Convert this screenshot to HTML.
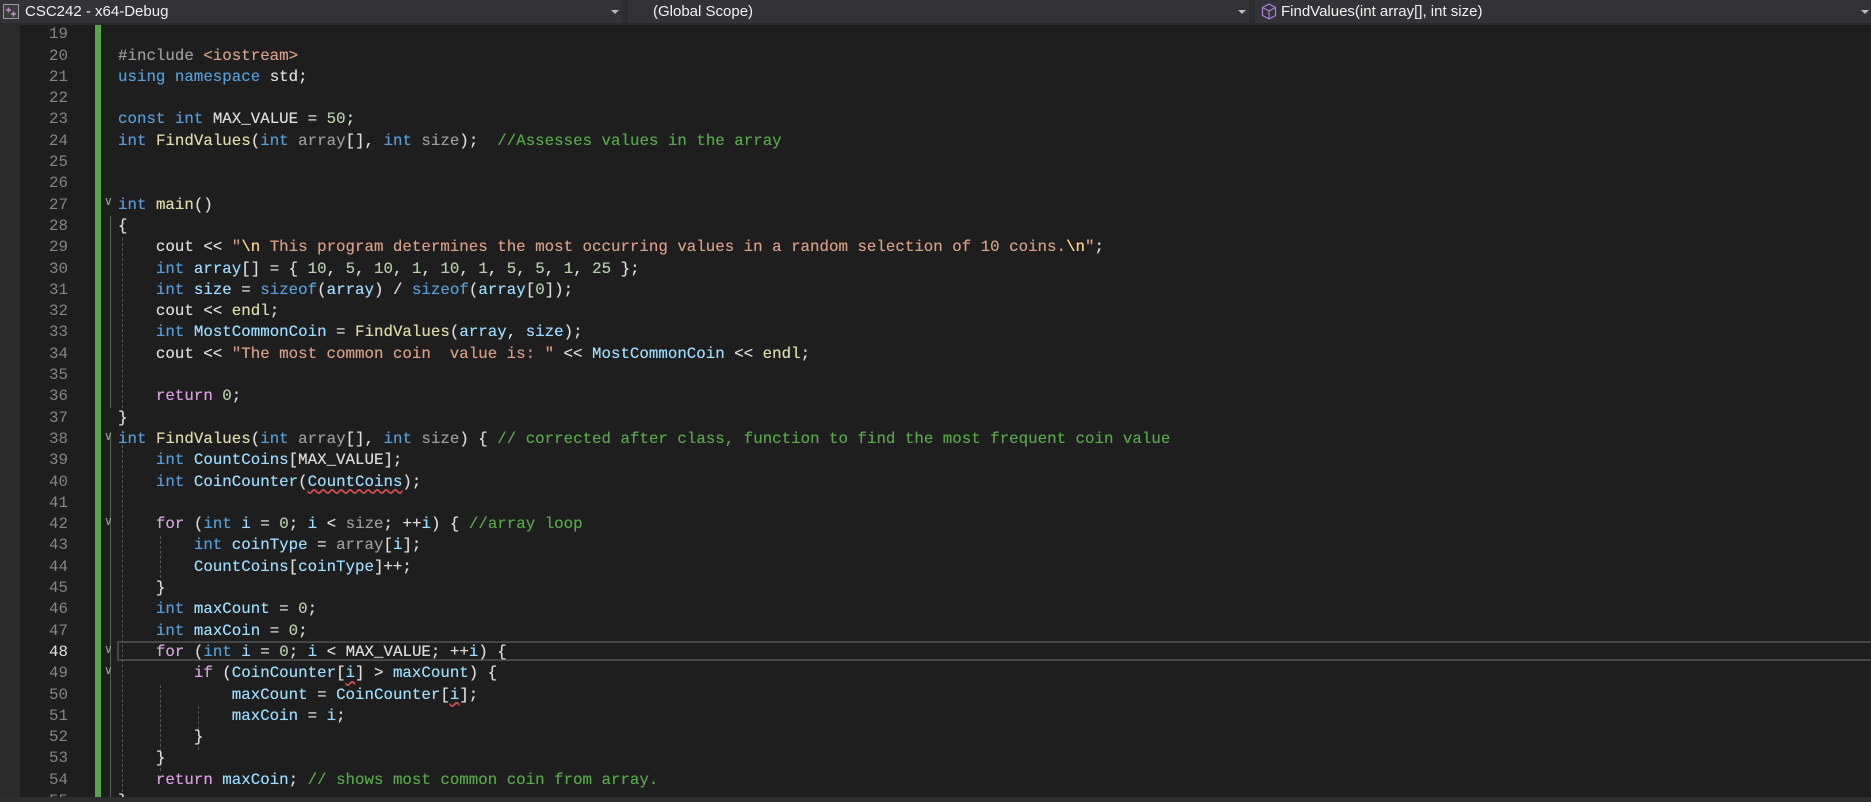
<!DOCTYPE html>
<html><head><meta charset="utf-8"><style>
html,body{margin:0;padding:0;background:#1e1e1e;width:1871px;height:802px;overflow:hidden;position:relative}
.top{position:absolute;left:0;top:0;width:1871px;height:23px;background:#333337;border-bottom:2px solid #2a2a2a}
.dd{position:absolute;top:0;height:23px;font:15px "Liberation Sans",sans-serif;color:#f1f1f1;line-height:23px}
.arr{position:absolute;top:10px;width:0;height:0;border-left:4px solid transparent;border-right:4px solid transparent;border-top:4px solid #bbb}
.sep{position:absolute;top:0;width:6px;height:23px;background:#2d2d30}
.strip{position:absolute;left:0;top:25px;width:20px;height:772px;background:#2b2b2b}
.green{position:absolute;left:95px;top:25px;width:6px;height:772px;background:#57a64a}
.nums{position:absolute;left:20px;top:24.3px;width:48px;text-align:right;font:15.8px/21.3px "Liberation Mono",monospace;color:#858585;white-space:pre}
.code{position:absolute;left:118px;top:24.3px;font:15.8px/21.3px "Liberation Mono",monospace;color:#dcdcdc;white-space:pre;text-shadow:0 0 0.4px currentColor}
.k{color:#569cd6}.c{color:#d8a0df}.f{color:#dcdcaa}.v{color:#9cdcfe}.p{color:#9a9a9a}.s{color:#d69d85}.n{color:#b5cea8}.m{color:#57a64a}.pp{color:#9b9b9b}.o{color:#b4b4b4}.e{color:#ffd68f}
.sq{text-decoration:underline wavy #e04040;text-underline-offset:3px}
.hl{position:absolute;left:117px;top:641px;width:1754px;height:16px;border:2px solid #464646}
.vg{position:absolute;width:0;border-left:1px dashed #555}
.fl{position:absolute;left:110px;width:0;border-left:1px solid #5a5a5a}
.fold{position:absolute;left:104px;font:12px "DejaVu Sans",sans-serif;color:#a0a0a0}
.bot{position:absolute;left:0;top:797px;width:1871px;height:5px;background:#2e2e2e}
</style></head><body>
<div class="top">
 <div class="dd" style="left:0;width:622px"><svg style="position:absolute;left:3px;top:4px" width="16" height="15"><rect x="0.5" y="0.5" width="15" height="14" fill="#3c3c3c" stroke="#9a9a9a"/><path d="M3 6h5M5.5 3.5v5M8 10h5M10.5 7.5v5" stroke="#c586c0" stroke-width="1.5"/></svg><span style="position:absolute;left:25px">CSC242 - x64-Debug</span><div class="arr" style="left:611px"></div></div>
 <div class="sep" style="left:622px"></div>
 <div class="dd" style="left:628px;width:620px"><span style="position:absolute;left:25px">(Global Scope)</span><div class="arr" style="left:610px"></div></div>
 <div class="sep" style="left:1249px"></div>
 <div class="dd" style="left:1255px;width:616px"><svg style="position:absolute;left:6px;top:3px" width="16" height="17"><path d="M8 1L14.5 4.5V12.5L8 16L1.5 12.5V4.5Z M1.5 4.5L8 8L14.5 4.5 M8 8V16" fill="none" stroke="#a87fd8" stroke-width="1.2"/></svg><span style="position:absolute;left:26px">FindValues(int array[], int size)</span><div class="arr" style="left:606px"></div></div>
</div>
<div class="strip"></div>
<div class="green"></div>
<div class="nums">19
20
21
22
23
24
25
26
27
28
29
30
31
32
33
34
35
36
37
38
39
40
41
42
43
44
45
46
47
<span style="color:#e0e0e0">48</span>
49
50
51
52
53
54
55</div>
<div class="hl"></div>
<div class="fl" style="top:216px;height:192px"></div>
<div class="fl" style="top:432px;height:370px"></div>
<div class="vg" style="left:122px;top:238px;height:170px"></div>
<div class="vg" style="left:122px;top:430px;height:367px"></div>
<div class="vg" style="left:160px;top:536px;height:42px"></div>
<div class="vg" style="left:160px;top:685px;height:86px"></div>
<div class="vg" style="left:198px;top:706px;height:44px"></div>
<div class="fold" style="top:194px">&#8744;</div>
<div class="fold" style="top:429px">&#8744;</div>
<div class="fold" style="top:514px">&#8744;</div>
<div class="fold" style="top:642px">&#8744;</div>
<div class="fold" style="top:663px">&#8744;</div>
<div class="code">
<span class="pp">#include</span> <span class="s">&lt;iostream&gt;</span>
<span class="k">using</span> <span class="k">namespace</span> std;

<span class="k">const</span> <span class="k">int</span> MAX_VALUE = <span class="n">50</span>;
<span class="k">int</span> <span class="f">FindValues</span>(<span class="k">int</span> <span class="p">array</span>[], <span class="k">int</span> <span class="p">size</span>);  <span class="m">//Assesses values in the array</span>


<span class="k">int</span> <span class="f">main</span>()
{
    cout &lt;&lt; <span class="s">"</span><span class="e">\n</span><span class="s"> This program determines the most occurring values in a random selection of 10 coins.</span><span class="e">\n</span><span class="s">"</span>;
    <span class="k">int</span> <span class="v">array</span>[] = { <span class="n">10</span>, <span class="n">5</span>, <span class="n">10</span>, <span class="n">1</span>, <span class="n">10</span>, <span class="n">1</span>, <span class="n">5</span>, <span class="n">5</span>, <span class="n">1</span>, <span class="n">25</span> };
    <span class="k">int</span> <span class="v">size</span> = <span class="k">sizeof</span>(<span class="v">array</span>) / <span class="k">sizeof</span>(<span class="v">array</span>[<span class="n">0</span>]);
    cout &lt;&lt; <span class="f">endl</span>;
    <span class="k">int</span> <span class="v">MostCommonCoin</span> = <span class="f">FindValues</span>(<span class="v">array</span>, <span class="v">size</span>);
    cout &lt;&lt; <span class="s">"The most common coin  value is: "</span> &lt;&lt; <span class="v">MostCommonCoin</span> &lt;&lt; <span class="f">endl</span>;

    <span class="c">return</span> <span class="n">0</span>;
}
<span class="k">int</span> <span class="f">FindValues</span>(<span class="k">int</span> <span class="p">array</span>[], <span class="k">int</span> <span class="p">size</span>) { <span class="m">// corrected after class, function to find the most frequent coin value</span>
    <span class="k">int</span> <span class="v">CountCoins</span>[MAX_VALUE];
    <span class="k">int</span> <span class="v">CoinCounter</span>(<span class="v sq">CountCoins</span>);

    <span class="c">for</span> (<span class="k">int</span> <span class="v">i</span> = <span class="n">0</span>; <span class="v">i</span> &lt; <span class="p">size</span>; ++<span class="v">i</span>) { <span class="m">//array loop</span>
        <span class="k">int</span> <span class="v">coinType</span> = <span class="p">array</span>[<span class="v">i</span>];
        <span class="v">CountCoins</span>[<span class="v">coinType</span>]++;
    }
    <span class="k">int</span> <span class="v">maxCount</span> = <span class="n">0</span>;
    <span class="k">int</span> <span class="v">maxCoin</span> = <span class="n">0</span>;
    <span class="c">for</span> (<span class="k">int</span> <span class="v">i</span> = <span class="n">0</span>; <span class="v">i</span> &lt; MAX_VALUE; ++<span class="v">i</span>) {
        <span class="c">if</span> (<span class="v">CoinCounter</span>[<span class="v sq">i</span>] &gt; <span class="v">maxCount</span>) {
            <span class="v">maxCount</span> = <span class="v">CoinCounter</span>[<span class="v sq">i</span>];
            <span class="v">maxCoin</span> = <span class="v">i</span>;
        }
    }
    <span class="c">return</span> <span class="v">maxCoin</span>; <span class="m">// shows most common coin from array.</span>
}</div>
<div class="bot"></div>
</body></html>
